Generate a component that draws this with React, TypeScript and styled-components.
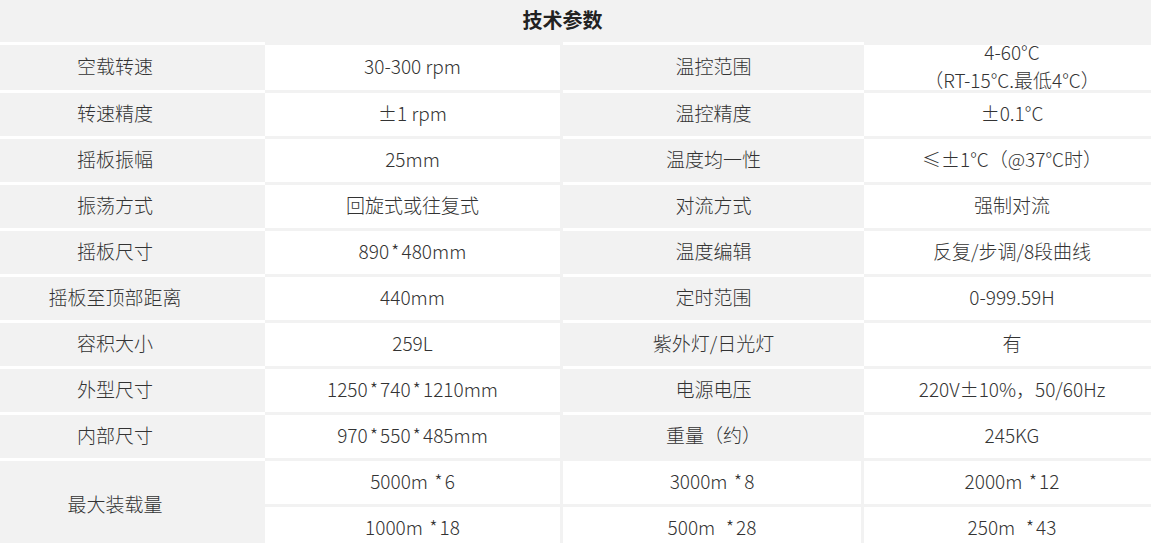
import styled, { createGlobalStyle } from "styled-components";

type Row = {
  label: string;
  value: React.ReactNode;
  label2: string;
  value2: React.ReactNode;
};

const GREY = "#f2f2f2";

const GlobalStyle = createGlobalStyle`
  body {
    margin: 0;
    background: #ffffff;
    overflow: hidden;
    font-family: "Noto Sans CJK SC", "Noto Sans", sans-serif;
  }
`;

const Table = styled("table")`
  width: 1195px;
  margin-left: -35px;
  table-layout: fixed;
  border-collapse: separate;
  border-spacing: 0;
  color: #333333;
  font-size: 19px;
  font-weight: 300;
`;

const HeadCell = styled("th")`
  height: 42px;
  padding: 0 0 3px;
  background: ${GREY};
  color: #222222;
  font-size: 20px;
  font-weight: 700;
  text-align: center;
  box-sizing: border-box;
`;

const Cell = styled("td")<{ $shaded?: boolean; $last?: boolean }>`
  height: 46px;
  padding: 0 0 3px;
  box-sizing: border-box;
  text-align: center;
  vertical-align: middle;
  line-height: 28px;
  white-space: pre;
  background: ${(p) => (p.$shaded ? GREY : "#ffffff")};
  border-top: 3px solid ${(p) => (p.$shaded ? "#ffffff" : GREY)};
  border-right: ${(p) => (p.$shaded || p.$last ? "0" : `3px solid ${GREY}`)};
`;

// two-line value that overflows its fixed-height row like the original
const Stack = styled("div")`
  margin: -7px 0;
  line-height: 28px;
`;

const Star = styled("span")`
  margin: 0 2px;
`;

const withStars = (text: string) =>
  text.split("*").map((part, i) => (
    <span key={i}>
      {i > 0 && <Star>*</Star>}
      {part}
    </span>
  ));

const rows: Row[] = [
  {
    label: "空载转速",
    value: "30-300 rpm",
    label2: "温控范围",
    value2: (
      <Stack>
        4-60°C
        <br />
        （RT-15°C.最低4°C）
      </Stack>
    ),
  },
  { label: "转速精度", value: "±1 rpm", label2: "温控精度", value2: "±0.1°C" },
  { label: "摇板振幅", value: "25mm", label2: "温度均一性", value2: "≤±1°C（@37°C时）" },
  { label: "振荡方式", value: "回旋式或往复式", label2: "对流方式", value2: "强制对流" },
  { label: "摇板尺寸", value: withStars("890*480mm"), label2: "温度编辑", value2: "反复/步调/8段曲线" },
  { label: "摇板至顶部距离", value: "440mm", label2: "定时范围", value2: "0-999.59H" },
  { label: "容积大小", value: "259L", label2: "紫外灯/日光灯", value2: "有" },
  {
    label: "外型尺寸",
    value: withStars("1250*740*1210mm"),
    label2: "电源电压",
    value2: "220V±10%，50/60Hz",
  },
  { label: "内部尺寸", value: withStars("970*550*485mm"), label2: "重量（约）", value2: "245KG" },
];

const loads = [
  ["5000m *6", "3000m *8", "2000m *12"],
  ["1000m *18", "500m  *28", "250m  *43"],
];

export default function App() {
  return (
    <>
      <GlobalStyle />
      <Table>
        <colgroup>
          <col style={{ width: 300 }} />
          <col style={{ width: 298 }} />
          <col style={{ width: 301 }} />
          <col style={{ width: 296 }} />
        </colgroup>
        <thead>
          <tr>
            <HeadCell colSpan={4}>技术参数</HeadCell>
          </tr>
        </thead>
        <tbody>
          {rows.map((r) => (
            <tr key={r.label}>
              <Cell $shaded>{r.label}</Cell>
              <Cell>{r.value}</Cell>
              <Cell $shaded>{r.label2}</Cell>
              <Cell $last>{r.value2}</Cell>
            </tr>
          ))}
          {loads.map((line, i) => (
            <tr key={i}>
              {i === 0 && (
                <Cell $shaded rowSpan={2}>
                  最大装载量
                </Cell>
              )}
              <Cell>{withStars(line[0])}</Cell>
              <Cell>{withStars(line[1])}</Cell>
              <Cell $last>{withStars(line[2])}</Cell>
            </tr>
          ))}
        </tbody>
      </Table>
    </>
  );
}
